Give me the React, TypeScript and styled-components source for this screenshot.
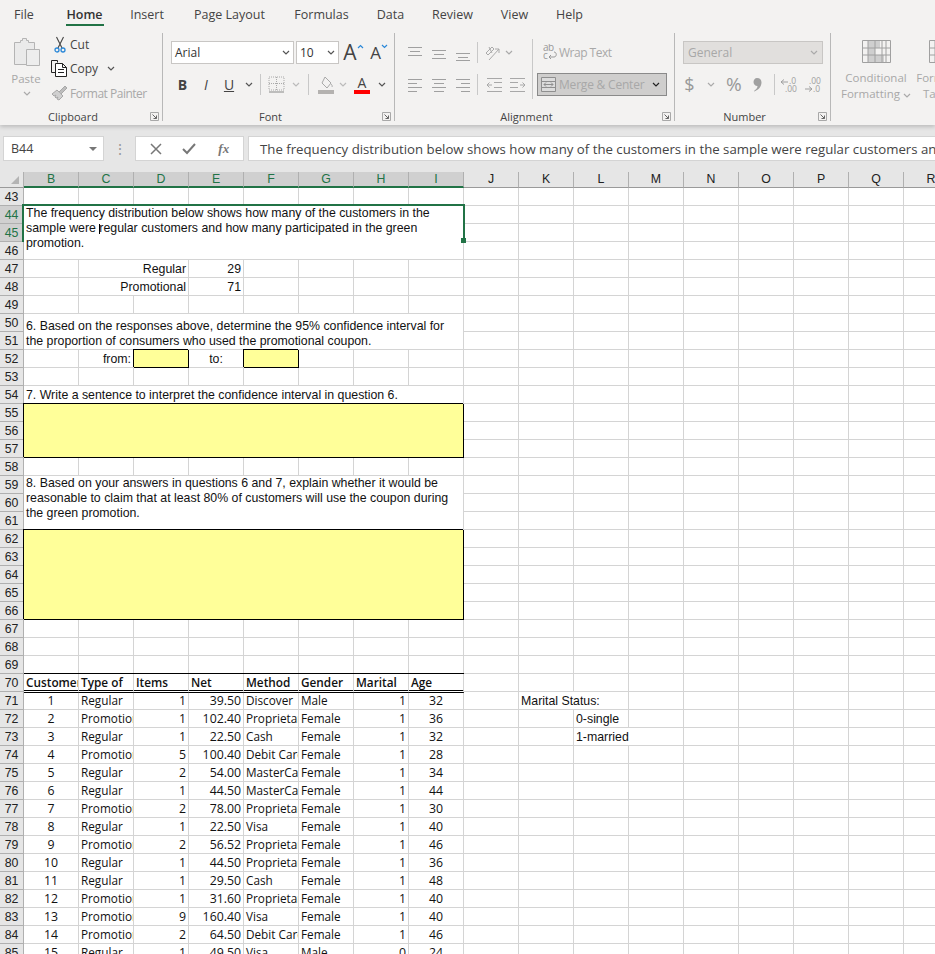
import React from 'react'
import styled, { createGlobalStyle } from 'styled-components'

const UI = `'Open Sans', 'Noto Sans', sans-serif`
const ARIAL = `'Liberation Sans', Arial, sans-serif`
const GRID = '#d4d4d4'
const GREEN = '#217346'
const DIS = '#a8a8a8'

const GlobalStyle = createGlobalStyle`
	html, body {
		margin: 0;
		padding: 0;
		background: #fff;
		overflow: hidden;
	}
`

const TABS = [
	{ label: 'File', w: 48 },
	{ label: 'Home', w: 73, active: true },
	{ label: 'Insert', w: 52 },
	{ label: 'Page Layout', w: 113 },
	{ label: 'Formulas', w: 71 },
	{ label: 'Data', w: 67 },
	{ label: 'Review', w: 57 },
	{ label: 'View', w: 67 },
	{ label: 'Help', w: 43 },
]

const FORMULA =
	'The frequency distribution below shows how many of the customers in the sample were regular customers and how many participated in the green promotion.'

const COLS = ['B', 'C', 'D', 'E', 'F', 'G', 'H', 'I', 'J', 'K', 'L', 'M', 'N', 'O', 'P', 'Q', 'R']

const CUSTOMERS: [number, string, number, string, string, string, number, number][] = [
	[1, 'Regular', 1, '39.50', 'Discover', 'Male', 1, 32],
	[2, 'Promotional', 1, '102.40', 'Proprietary', 'Female', 1, 36],
	[3, 'Regular', 1, '22.50', 'Cash', 'Female', 1, 32],
	[4, 'Promotional', 5, '100.40', 'Debit Card', 'Female', 1, 28],
	[5, 'Regular', 2, '54.00', 'MasterCard', 'Female', 1, 34],
	[6, 'Regular', 1, '44.50', 'MasterCard', 'Female', 1, 44],
	[7, 'Promotional', 2, '78.00', 'Proprietary', 'Female', 1, 30],
	[8, 'Regular', 1, '22.50', 'Visa', 'Female', 1, 40],
	[9, 'Promotional', 2, '56.52', 'Proprietary', 'Female', 1, 46],
	[10, 'Regular', 1, '44.50', 'Proprietary', 'Female', 1, 36],
	[11, 'Regular', 1, '29.50', 'Cash', 'Female', 1, 48],
	[12, 'Promotional', 1, '31.60', 'Proprietary', 'Female', 1, 40],
	[13, 'Promotional', 9, '160.40', 'Visa', 'Female', 1, 40],
	[14, 'Promotional', 2, '64.50', 'Debit Card', 'Female', 1, 46],
	[15, 'Regular', 1, '49.50', 'Visa', 'Male', 0, 24],
]

type Spec = {
	text?: React.ReactNode
	span?: number
	rows?: number
	align?: 'left' | 'center' | 'right'
	valign?: 'start' | 'center' | 'end'
	tone?: 'plain' | 'note' | 'input' | 'head' | 'data' | 'num'
}

const note = (lines: React.ReactNode[], rows: number, valign: Spec['valign']): Spec => ({
	span: 8,
	rows,
	valign,
	tone: 'note',
	text: lines.map((line, i) => <div key={i}>{line}</div>),
})

const sheetRows: Record<number, Spec[]> = {
	47: [{}, { span: 2, text: 'Regular', align: 'right', tone: 'note' }, { text: '29', align: 'right', tone: 'note' }],
	48: [{}, { span: 2, text: 'Promotional', align: 'right', tone: 'note' }, { text: '71', align: 'right', tone: 'note' }],
	50: [
		note(
			[
				'6. Based on the responses above, determine the 95% confidence interval for',
				'the proportion of consumers who used the promotional coupon.',
			],
			2,
			'end',
		),
	],
	52: [
		{},
		{ text: 'from:', align: 'right', tone: 'note' },
		{ tone: 'input' },
		{ text: 'to:', align: 'center', tone: 'note' },
		{ tone: 'input' },
	],
	54: [note(['7. Write a sentence to interpret the confidence interval in question 6.'], 1, 'center')],
	55: [{ span: 8, rows: 3, tone: 'input' }],
	59: [
		note(
			[
				'8. Based on your answers in questions 6 and 7, explain whether it would be',
				'reasonable to claim that at least 80% of customers will use the coupon during',
				'the green promotion.',
			],
			3,
			'start',
		),
	],
	62: [{ span: 8, rows: 5, tone: 'input' }],
	70: ['Customer', 'Type of', 'Items', 'Net', 'Method', 'Gender', 'Marital', 'Age'].map(text => ({
		text,
		tone: 'head' as const,
	})),
}

CUSTOMERS.forEach((c, i) => {
	sheetRows[71 + i] = [
		{ text: c[0], align: 'center', tone: 'num' },
		{ text: c[1], tone: 'data' },
		{ text: c[2], align: 'right', tone: 'num' },
		{ text: c[3], align: 'right', tone: 'num' },
		{ text: c[4], tone: 'data' },
		{ text: c[5], tone: 'data' },
		{ text: c[6], align: 'right', tone: 'num' },
		{ text: c[7], align: 'center', tone: 'num' },
	]
})
sheetRows[71].push({}, { span: 2, text: 'Marital Status:', tone: 'note' })
sheetRows[72].push({}, {}, { text: '0-single', tone: 'note' })
sheetRows[73].push({}, {}, { span: 2, text: '1-married', tone: 'note' })

const buildSheet = () => {
	const out: React.ReactNode[] = []
	const covered: Record<number, number> = { 45: 8, 46: 8 }
	for (let n = 43; n <= 85; n++) {
		out.push(
			<RowHead key={`h${n}`} $active={n === 44 || n === 45}>
				{n}
			</RowHead>,
		)
		if (n === 44) {
			out.push(
				<Cell key='c44' $span={8} $rows={3} $valign='start' $tone='note' $raised>
					<div>The frequency distribution below shows how many of the customers in the</div>
					<div>
						sample were <Caret />
						regular customers and how many participated in the green
					</div>
					<div>promotion.</div>
					<Selection>
						<FillHandle />
					</Selection>
				</Cell>,
			)
		}
		const specs = sheetRows[n] || []
		let used = (covered[n] || 0) + (n === 44 ? 8 : 0)
		specs.forEach((s, i) => {
			used += s.span || 1
			if (s.rows) for (let k = 1; k < s.rows; k++) covered[n + k] = s.span || 1
			out.push(
				<Cell
					key={`${n}-${i}`}
					$span={s.span || 1}
					$rows={s.rows || 1}
					$align={s.align || 'left'}
					$valign={s.valign || 'center'}
					$tone={s.tone || 'plain'}
				>
					{s.text}
				</Cell>,
			)
		})
		for (let i = used; i < 17; i++) out.push(<Cell key={`${n}b${i}`} />)
	}
	return out
}

const Chevron = ({ color = '#555' }: { color?: string }) => (
	<svg width='8' height='5' viewBox='0 0 8 5'>
		<polyline points='1,1 4,4 7,1' fill='none' stroke={color} strokeWidth='1.2' />
	</svg>
)

const SizeCaret = ({ down }: { down?: boolean }) => (
	<svg width='7' height='5' viewBox='0 0 7 5'>
		<polyline points={down ? '1,1 3.500,3.500 6,1' : '1,4 3.500,1.500 6,4'} fill='none' stroke='#2b88d8' strokeWidth='1.2' />
	</svg>
)

const Launcher = () => (
	<svg width='9' height='9' viewBox='0 0 9 9'>
		<path d='M.5 8.5V.5h8v8z' fill='none' stroke='#a8a8a8' />
		<path d='M2.5 2.5l4 4M6.5 3.5v3h-3' fill='none' stroke='#666' />
	</svg>
)

const Lines = ({ rows, w = 15, h = 16 }: { rows: [number, number, number][]; w?: number; h?: number }) => (
	<svg width={w} height={h} viewBox={`0 0 ${w} ${h}`}>
		{rows.map(([x1, x2, y], i) => (
			<line key={i} x1={x1} x2={x2} y1={y + 0.5} y2={y + 0.5} stroke='#a0a0a0' />
		))}
	</svg>
)

const PasteIcon = () => (
	<svg width='29' height='30' viewBox='0 0 29 30'>
		<path d='M1.5 5.5h6v-2h2v-2h4v2h2v2h6v22h-20z' fill='#eaeaea' stroke='#b4b4b4' />
		<path d='M13.5 12.5h13v16h-13z' fill='#ededed' stroke='#b4b4b4' />
	</svg>
)

const CutIcon = () => (
	<svg width='12' height='17' viewBox='0 0 12 17'>
		<path d='M2.5 1l5.5 11M9.5 1L4 12' fill='none' stroke='#444' strokeWidth='1.1' />
		<circle cx='3' cy='14' r='2' fill='none' stroke='#2b88d8' strokeWidth='1.3' />
		<circle cx='9' cy='14' r='2' fill='none' stroke='#2b88d8' strokeWidth='1.3' />
	</svg>
)

const CopyIcon = () => (
	<svg width='17' height='17' viewBox='0 0 17 17'>
		<path d='M.5.5h6v2M.5.5v12h4' fill='none' stroke='#222' />
		<path d='M4.5 3.5h7l4 4v9h-11zM11.5 3.5v4h4M7 9.5h6M7 12.5h6' fill='#fff' stroke='#222' />
	</svg>
)

const PainterIcon = () => (
	<svg width='17' height='16' viewBox='0 0 17 16'>
		<path d='M1 9l5-4 6 6-4 4-2-1 1-2-2 1-1-1 1-2-2 1z' fill='#d0d0d0' stroke='#a8a8a8' />
		<path d='M8 7l6-6 2 2-6 6' fill='#bdbdbd' stroke='#a8a8a8' />
	</svg>
)

const BordersIcon = () => (
	<svg width='17' height='17' viewBox='0 0 17 17'>
		<path d='M1 1h15v13H1zM8.5 1v13M1 7.5h15' fill='none' stroke='#aaa' strokeDasharray='1 1' />
		<path d='M1 16h15' stroke='#999' strokeWidth='1.2' />
	</svg>
)

const FillIcon = () => (
	<svg width='17' height='18' viewBox='0 0 17 18'>
		<path d='M7 1l6 6-4 5-5-5zM13 8c1 1 1.5 2 1 3' fill='#f3f2f1' stroke='#a8a8a8' />
		<rect x='0' y='14' width='16' height='4' fill='#b4b2b0' />
	</svg>
)

const OrientationIcon = () => (
	<svg width='17' height='17' viewBox='0 0 17 17'>
		<path d='M2 9l6-6 2 2-6 6zM5 3l3 6' fill='none' stroke='#aaa' />
		<path d='M5 16L15 5M11 5h4v4' fill='none' stroke='#aaa' />
	</svg>
)

const IndentIcon = ({ flip }: { flip?: boolean }) => (
	<svg width='15' height='14' viewBox='0 0 15 14' style={flip ? { transform: 'scaleX(-1)' } : undefined}>
		<path d='M0 .5h15M0 13.5h15M7 4.5h8M7 9.5h8' stroke='#a8a8a8' />
		<path d='M5 7H0M2.5 4.5L0 7l2.5 2.5' fill='none' stroke='#a8a8a8' />
	</svg>
)

const WrapIcon = () => (
	<svg width='14' height='17' viewBox='0 0 14 17'>
		<text x='0' y='7' fontSize='10' fontFamily={UI} fill='#999'>
			ab
		</text>
		<text x='0' y='15' fontSize='10' fontFamily={UI} fill='#999'>
			c
		</text>
		<path d='M6 13h5c3 0 3-5 0-5M6 13l2-2M6 13l2 2' fill='none' stroke='#999' />
	</svg>
)

const MergeIcon = () => (
	<svg width='15' height='15' viewBox='0 0 15 15'>
		<path d='M.5.5h14v14H.5zM.5 4.5h14M.5 10.5h14' fill='#dcdcdc' stroke='#8f8f8f' />
		<path d='M3 7.5h9M5 5.5l-2 2 2 2M10 5.5l2 2-2 2' fill='none' stroke='#8f8f8f' />
	</svg>
)

const DecimalIcon = ({ more }: { more?: boolean }) => (
	<svg width='17' height='16' viewBox='0 0 17 16'>
		<text x={more ? 8 : 4} y='7' fontSize='8.500' fontFamily={UI} fill='#a0a0a0'>
			{more ? '.0' : '.00'}
		</text>
		<text x={more ? 4 : 8} y='15' fontSize='8.500' fontFamily={UI} fill='#a0a0a0'>
			{more ? '.00' : '.0'}
		</text>
		<path d={more ? 'M0 5h7M3 2.500L0 5l3 2.500' : 'M0 12h7M4 9.500L7 12l-3 2.500'} fill='none' stroke='#a0a0a0' />
	</svg>
)

const CommaIcon = () => (
	<svg width='9' height='14' viewBox='0 0 9 14'>
		<path d='M4 0c3 0 4.500 2 4.500 4.500C8.500 9 5 12 1.500 13.500L1 13c2-1.500 3.500-3 3.500-5C2 8 .5 6 .5 4S2 0 4 0z' fill='#a0a0a0' />
	</svg>
)

const ConditionalIcon = () => (
	<svg width='29' height='23' viewBox='0 0 29 23'>
		<path d='M.5.5h28v22H.5z' fill='#f3f2f1' stroke='#a0a0a0' />
		<path d='M6 1h12v7h-12zM6 8h7v7h-7zM6 15h16v7H6z' fill='#cfcfcf' />
		<path d='M6 0v23M13 0v23M20 0v23M24 0v23M0 8h29M0 15h29' stroke='#a0a0a0' fill='none' />
	</svg>
)

const App = () => (
	<Page>
		<GlobalStyle />
		<TabBar>
			{TABS.map(t => (
				<Tab key={t.label} $w={t.w} $active={t.active}>
					{t.label}
				</Tab>
			))}
		</TabBar>
		<Ribbon>
			<Group $w={163}>
				<GroupBody>
					<ClipboardBody>
						<PasteCol>
							<PasteIcon />
							<PasteLabel>Paste</PasteLabel>
							<Chevron color='#aaa' />
						</PasteCol>
						<ClipList>
							<ClipItem>
								<IconBox>
									<CutIcon />
								</IconBox>
								Cut
							</ClipItem>
							<ClipItem>
								<IconBox>
									<CopyIcon />
								</IconBox>
								Copy
								<ChevronGap>
									<Chevron />
								</ChevronGap>
							</ClipItem>
							<ClipItem $disabled>
								<IconBox>
									<PainterIcon />
								</IconBox>
								Format Painter
							</ClipItem>
						</ClipList>
					</ClipboardBody>
				</GroupBody>
				<GroupFooter>
					<GroupLabel>Clipboard</GroupLabel>
					<LauncherSlot>
						<Launcher />
					</LauncherSlot>
				</GroupFooter>
			</Group>

			<Group $w={232}>
				<GroupBody $pad={8}>
					<ToolRow>
						<Select $w={123}>
							Arial
							<Chevron />
						</Select>
						<Select $w={43} $ml={2}>
							10
							<Chevron />
						</Select>
						<Slot $w={29}>
							<BigA $size={21}>A</BigA>
							<CaretSlot>
								<SizeCaret />
							</CaretSlot>
						</Slot>
						<Slot $w={22}>
							<BigA $size={17}>A</BigA>
							<CaretSlot>
								<SizeCaret down />
							</CaretSlot>
						</Slot>
					</ToolRow>
					<ToolRow $mt={9}>
						<Slot $w={23}>
							<FontMark $bold>B</FontMark>
						</Slot>
						<Slot $w={24}>
							<FontMark $italic>I</FontMark>
						</Slot>
						<Slot $w={22}>
							<FontMark $under>U</FontMark>
						</Slot>
						<Slot $w={18}>
							<Chevron />
						</Slot>
						<VSep $m={2} />
						<Slot $w={27}>
							<BordersIcon />
						</Slot>
						<Slot $w={12}>
							<Chevron color='#bbb' />
						</Slot>
						<VSep $m={6} />
						<Slot $w={22}>
							<FillIcon />
						</Slot>
						<Slot $w={12}>
							<Chevron color='#bbb' />
						</Slot>
						<Slot $w={26}>
							<ColorA>A</ColorA>
						</Slot>
						<Slot $w={14}>
							<Chevron />
						</Slot>
					</ToolRow>
				</GroupBody>
				<GroupFooter>
					<GroupLabel>Font</GroupLabel>
					<LauncherSlot>
						<Launcher />
					</LauncherSlot>
				</GroupFooter>
			</Group>

			<Group $w={280}>
				<AlignBody>
					<AlignLeft>
						<ToolRow>
							<Slot $w={24}>
								<Lines rows={[[0, 14, 2], [2, 12, 6], [0, 14, 10]]} />
							</Slot>
							<Slot $w={24}>
								<Lines rows={[[0, 14, 5], [2, 12, 9], [0, 14, 13]]} />
							</Slot>
							<Slot $w={24}>
								<Lines rows={[[0, 14, 8], [2, 12, 12], [0, 14, 15]]} />
							</Slot>
							<VSep $m={2} />
							<Slot $w={25}>
								<OrientationIcon />
							</Slot>
							<Slot $w={8}>
								<Chevron color='#aaa' />
							</Slot>
						</ToolRow>
						<ToolRow $mt={9}>
							<Slot $w={24}>
								<Lines rows={[[0, 14, 2], [0, 9, 6], [0, 14, 10], [0, 9, 14]]} />
							</Slot>
							<Slot $w={24}>
								<Lines rows={[[0, 14, 2], [2, 12, 6], [0, 14, 10], [2, 12, 14]]} />
							</Slot>
							<Slot $w={24}>
								<Lines rows={[[0, 14, 2], [5, 14, 6], [0, 14, 10], [5, 14, 14]]} />
							</Slot>
							<VSep $m={2} />
							<Slot $w={28}>
								<IndentIcon />
							</Slot>
							<Slot $w={18}>
								<IndentIcon flip />
							</Slot>
						</ToolRow>
					</AlignLeft>
					<AlignRight>
						<WrapRow>
							<WrapIcon />
							Wrap Text
						</WrapRow>
						<MergeButton>
							<MergeIcon />
							<MergeText>Merge &amp; Center</MergeText>
							<Chevron color='#222' />
						</MergeButton>
					</AlignRight>
				</AlignBody>
				<GroupFooter>
					<GroupLabel>Alignment</GroupLabel>
					<LauncherSlot>
						<Launcher />
					</LauncherSlot>
				</GroupFooter>
			</Group>

			<Group $w={156}>
				<GroupBody $pad={8}>
					<NumberSelect>
						General
						<Chevron color='#aaa' />
					</NumberSelect>
					<ToolRow $mt={9}>
						<Slot $w={13}>
							<NumberMark $size={18}>$</NumberMark>
						</Slot>
						<Slot $w={30}>
							<Chevron color='#aaa' />
						</Slot>
						<Slot $w={14}>
							<NumberMark $size={19}>%</NumberMark>
						</Slot>
						<Slot $w={32}>
							<CommaIcon />
						</Slot>
						<VSep $m={0} />
						<Slot $w={30}>
							<DecimalIcon more />
						</Slot>
						<Slot $w={17}>
							<DecimalIcon />
						</Slot>
					</ToolRow>
				</GroupBody>
				<GroupFooter>
					<GroupLabel>Number</GroupLabel>
					<LauncherSlot>
						<Launcher />
					</LauncherSlot>
				</GroupFooter>
			</Group>

			<StylesGroup>
				<StyleButton $w={90}>
					<ConditionalIcon />
					<StyleLabel>
						Conditional
						<br />
						Formatting <Chevron color='#aaa' />
					</StyleLabel>
				</StyleButton>
				<StyleButton $w={44}>
					<ConditionalIcon />
					<StyleLabel>
						Format as
						<br />
						Table <Chevron color='#aaa' />
					</StyleLabel>
				</StyleButton>
			</StylesGroup>
		</Ribbon>

		<FormulaBar>
			<NameBox>
				B44
				<DownTriangle />
			</NameBox>
			<Dots>⋮</Dots>
			<FxBox>
				<svg width='12' height='12' viewBox='0 0 12 12'>
					<path d='M1 1l10 10M11 1L1 11' stroke='#777' strokeWidth='1.5' />
				</svg>
				<svg width='14' height='12' viewBox='0 0 14 12'>
					<path d='M1 6l4 4 8-9' fill='none' stroke='#777' strokeWidth='2' />
				</svg>
				<FxMark>fx</FxMark>
			</FxBox>
			<FormulaInput>{FORMULA}</FormulaInput>
		</FormulaBar>

		<Sheet>
			<Corner>
				<svg width='8' height='8' viewBox='0 0 8 8'>
					<path d='M8 0v8H0z' fill='#b4b4b4' />
				</svg>
			</Corner>
			{COLS.map((c, i) => (
				<ColHead key={c} $active={i < 8}>
					{c}
				</ColHead>
			))}
			{buildSheet()}
		</Sheet>
	</Page>
)

export default App

const Page = styled.div`
	width: 935px;
	height: 954px;
	overflow: hidden;
	background: #e6e6e6;
	font-family: ${UI};
`

const TabBar = styled.div`
	display: flex;
	height: 30px;
	background: #f3f2f1;
`

const Tab = styled.div<{ $w: number; $active?: boolean }>`
	position: relative;
	flex: 0 0 ${p => p.$w}px;
	font-size: 12.5px;
	line-height: 30px;
	text-align: center;
	color: ${p => (p.$active ? '#333' : '#444')};
	font-weight: ${p => (p.$active ? 600 : 400)};

	${p =>
		p.$active &&
		`&::after {
			content: '';
			position: absolute;
			left: 18px;
			right: 17px;
			top: 24px;
			height: 2px;
			background: ${GREEN};
		}`}
`

const Ribbon = styled.div`
	position: relative;
	display: flex;
	height: 92px;
	padding-top: 3px;
	background: #f3f2f1;
	box-shadow: 0 2px 4px rgba(0, 0, 0, 0.18);
	overflow: hidden;
	clip-path: inset(0 0 -6px 0);
`

const Group = styled.div<{ $w: number }>`
	flex: 0 0 ${p => p.$w}px;
	box-sizing: border-box;
	display: flex;
	flex-direction: column;
	height: 88px;
	border-right: 1px solid #b8b8b8;
`

const GroupBody = styled.div<{ $pad?: number }>`
	flex: 1;
	padding: 8px 0 0 ${p => p.$pad || 0}px;
`

const GroupFooter = styled.div`
	display: flex;
	align-items: center;
	height: 9px;
	padding-top: 2px;
`

const GroupLabel = styled.div`
	flex: 1;
	text-align: center;
	font-size: 11px;
	line-height: 8px;
	color: #444;
`

const LauncherSlot = styled.div`
	flex: 0 0 16px;
	display: flex;
	justify-content: flex-end;
	padding-right: 3px;
	box-sizing: border-box;
	height: 9px;
`

const ClipboardBody = styled.div`
	display: flex;
	margin-top: -9px;
`

const PasteCol = styled.div`
	flex: 0 0 50px;
	display: flex;
	flex-direction: column;
	align-items: center;
	padding: 5px 0 0 4px;
	box-sizing: border-box;
`

const PasteLabel = styled.div`
	font-size: 11.5px;
	line-height: 16px;
	margin: 4px 0 4px -2px;
	color: ${DIS};
`

const ClipList = styled.div`
	display: flex;
	flex-direction: column;
`

const ClipItem = styled.div<{ $disabled?: boolean }>`
	display: flex;
	align-items: center;
	height: 24.5px;
	font-size: 12px;
	color: ${p => (p.$disabled ? DIS : '#444')};
	letter-spacing: ${p => (p.$disabled ? '-0.5px' : '0')};
	white-space: nowrap;
`

const IconBox = styled.span`
	display: flex;
	justify-content: center;
	width: 19px;
	margin-right: 1px;
`

const ChevronGap = styled.span`
	display: flex;
	margin-left: 9px;
`

const ToolRow = styled.div<{ $mt?: number }>`
	display: flex;
	align-items: center;
	height: 23px;
	margin-top: ${p => p.$mt || 0}px;
`

const Select = styled.div<{ $w: number; $ml?: number }>`
	flex: 0 0 ${p => p.$w}px;
	margin-left: ${p => p.$ml || 0}px;
	box-sizing: border-box;
	height: 23px;
	display: flex;
	align-items: center;
	justify-content: space-between;
	padding: 0 3px;
	background: #fff;
	border: 1px solid #c8c6c4;
	font-size: 12px;
	color: #333;
`

const Slot = styled.div<{ $w: number }>`
	flex: 0 0 ${p => p.$w}px;
	display: flex;
	align-items: center;
	justify-content: center;
	height: 23px;
`

const BigA = styled.span<{ $size: number }>`
	font-family: ${UI};
	font-size: ${p => p.$size}px;
	line-height: 23px;
	color: #444;
`

const CaretSlot = styled.span`
	display: flex;
	align-self: flex-start;
	margin-top: 3px;
`

const FontMark = styled.span<{ $bold?: boolean; $italic?: boolean; $under?: boolean }>`
	font-family: ${UI};
	font-size: 14px;
	color: #444;
	font-weight: ${p => (p.$bold ? 700 : 400)};
	font-style: ${p => (p.$italic ? 'italic' : 'normal')};
	text-decoration: ${p => (p.$under ? 'underline' : 'none')};
`

const ColorA = styled.span`
	width: 16px;
	font-size: 14px;
	line-height: 15px;
	text-align: center;
	color: #444;
	border-bottom: 4px solid #ff0000;
`

const VSep = styled.div<{ $m: number }>`
	flex: 0 0 1px;
	height: 21px;
	margin: 0 ${p => p.$m}px;
	background: #c8c8c8;
`

const AlignBody = styled.div`
	flex: 1;
	display: flex;
	padding: 8px 0 0 8px;
`

const AlignLeft = styled.div`
	flex: 0 0 129px;
	overflow: hidden;
`

const AlignRight = styled.div`
	display: flex;
	flex-direction: column;
	box-sizing: border-box;
	width: 136px;
	height: 60px;
	margin-top: -2px;
	padding: 2px 0 0 4px;
	border-left: 1px solid #c8c8c8;
`

const WrapRow = styled.div`
	display: flex;
	align-items: center;
	gap: 2px;
	height: 23px;
	padding-left: 6px;
	font-size: 12px;
	letter-spacing: -0.5px;
	color: ${DIS};
`

const MergeButton = styled.div`
	display: flex;
	align-items: center;
	box-sizing: border-box;
	width: 130px;
	height: 23px;
	margin-top: 9px;
	padding: 0 6px 0 3px;
	background: #cfcecd;
	border: 1px solid #8a8a8a;
`

const MergeText = styled.span`
	flex: 1;
	margin-left: 3px;
	font-size: 12px;
	letter-spacing: -0.2px;
	color: ${DIS};
`

const NumberSelect = styled.div`
	display: flex;
	align-items: center;
	justify-content: space-between;
	box-sizing: border-box;
	width: 140px;
	height: 23px;
	padding: 0 4px;
	background: #e1dfdd;
	border: 1px solid #c8c6c4;
	font-size: 12px;
	color: ${DIS};
`

const NumberMark = styled.span<{ $size: number }>`
	font-size: ${p => p.$size}px;
	line-height: 23px;
	color: #999;
`

const StylesGroup = styled.div`
	display: flex;
	flex: 0 0 auto;
	height: 88px;
`

const StyleButton = styled.div<{ $w: number }>`
	flex: 0 0 ${p => p.$w}px;
	min-width: 0;
	display: flex;
	flex-direction: column;
	align-items: center;
	padding-top: 7px;
`

const StyleLabel = styled.div`
	margin-top: 7px;
	font-size: 11.5px;
	line-height: 16px;
	text-align: center;
	white-space: nowrap;
	color: ${DIS};
`

const FormulaBar = styled.div`
	display: flex;
	height: 36px;
	padding: 11px 0 0 3px;
	box-sizing: content-box;
	background: #e6e6e6;
`

const NameBox = styled.div`
	flex: 0 0 101px;
	box-sizing: border-box;
	height: 25px;
	display: flex;
	align-items: center;
	justify-content: space-between;
	padding: 0 6px 0 7px;
	background: #fff;
	border: 1px solid #d4d4d4;
	font-size: 12.5px;
	color: #444;
`

const DownTriangle = styled.span`
	width: 0;
	height: 0;
	border-left: 4px solid transparent;
	border-right: 4px solid transparent;
	border-top: 4px solid #777;
`

const Dots = styled.div`
	flex: 0 0 31px;
	text-align: center;
	font-size: 14px;
	line-height: 25px;
	color: #999;
`

const FxBox = styled.div`
	flex: 0 0 109px;
	box-sizing: border-box;
	height: 25px;
	display: flex;
	align-items: center;
	justify-content: space-around;
	padding: 0 4px;
	background: #fff;
	border: 1px solid #d4d4d4;
`

const FxMark = styled.span`
	margin-left: 3px;
	font-family: 'Liberation Serif', serif;
	font-style: italic;
	font-weight: 700;
	font-size: 13px;
	color: #777;
`

const FormulaInput = styled.div`
	flex: 1;
	min-width: 0;
	box-sizing: border-box;
	height: 25px;
	margin-left: 4px;
	padding-left: 11px;
	background: #fff;
	border: 1px solid #d4d4d4;
	border-right: none;
	font-size: 13.22px;
	line-height: 24px;
	color: #444;
	white-space: nowrap;
	overflow: hidden;
`

const Sheet = styled.div`
	display: grid;
	grid-template-columns: 24px repeat(17, 55px);
	grid-template-rows: 16px;
	grid-auto-rows: 18px;
	height: 782px;
	overflow: hidden;
	background: #fff;
`

const Corner = styled.div`
	display: flex;
	align-items: flex-end;
	justify-content: flex-end;
	box-sizing: border-box;
	padding: 0 4px 3px 0;
	background: #e6e6e6;
	border-right: 1px solid #b0b0b0;
	border-bottom: 1px solid #9a9a9a;
`

const ColHead = styled.div<{ $active: boolean }>`
	box-sizing: border-box;
	text-align: center;
	font-family: ${ARIAL};
	font-size: 12.33px;
	line-height: 14px;
	color: ${p => (p.$active ? GREEN : '#222')};
	background: ${p => (p.$active ? '#d0d0d0' : '#e6e6e6')};
	border-right: 1px solid #b0b0b0;
	border-bottom: ${p => (p.$active ? `2px solid ${GREEN}` : '1px solid #9a9a9a')};
`

const RowHead = styled.div<{ $active: boolean }>`
	grid-column: 1;
	box-sizing: border-box;
	text-align: center;
	font-family: ${ARIAL};
	font-size: 12.33px;
	line-height: 18px;
	color: ${p => (p.$active ? GREEN : '#222')};
	background: ${p => (p.$active ? '#d0d0d0' : '#e6e6e6')};
	border-right: 1px solid #b0b0b0;
	border-bottom: 1px solid #b0b0b0;
`

const CELL_TONES = {
	plain: '',
	note: `font-family: ${ARIAL}; font-size: 12.33px; line-height: 15px;`,
	data: `font-family: ${UI}; font-size: 11.75px; line-height: 17px; overflow: hidden; padding-right: 0;`,
	num: `font-family: ${UI}; font-size: 12.3px; line-height: 17px; overflow: hidden;`,
	head: `font-family: ${UI}; font-size: 11.8px; font-weight: 600; line-height: 17px; overflow: hidden; padding-right: 0;
		border-bottom: 3px double #000; box-shadow: 0 -1px 0 #000; z-index: 1; height: 19px;`,
	input: `background: #ffff99; border-right: 1px solid #000; border-bottom: 1px solid #000;
		box-shadow: -1px -1px 0 #000; z-index: 1;`,
}

const Cell = styled.div<{
	$span?: number
	$rows?: number
	$align?: 'left' | 'center' | 'right'
	$valign?: 'start' | 'center' | 'end'
	$tone?: keyof typeof CELL_TONES
	$raised?: boolean
}>`
	position: relative;
	grid-column: span ${p => p.$span || 1};
	grid-row: span ${p => p.$rows || 1};
	box-sizing: border-box;
	display: flex;
	flex-direction: column;
	justify-content: ${p => (p.$valign === 'start' ? 'flex-start' : p.$valign === 'end' ? 'flex-end' : 'center')};
	padding: ${p => (p.$tone === 'note' && p.$valign === 'center' ? 2 : 0)}px 2px 0 2px;
	text-align: ${p => p.$align || 'left'};
	white-space: nowrap;
	color: #111;
	background: #fff;
	border-right: 1px solid ${GRID};
	border-bottom: 1px solid ${GRID};
	${p => CELL_TONES[p.$tone || 'plain']}
	${p => p.$raised && 'z-index: 2;'}
`

const Caret = styled.span`
	display: inline-block;
	width: 0;
	height: 10px;
	margin-right: -1px;
	vertical-align: -2px;
	border-left: 1px solid #000;
`

const Selection = styled.div`
	position: absolute;
	left: -2px;
	top: -2px;
	width: 443px;
	height: 38px;
	box-sizing: border-box;
	border: 2px solid ${GREEN};
	border-bottom: none;
	pointer-events: none;
`

const FillHandle = styled.div`
	position: absolute;
	right: -3px;
	bottom: -1px;
	width: 5px;
	height: 5px;
	background: ${GREEN};
`
